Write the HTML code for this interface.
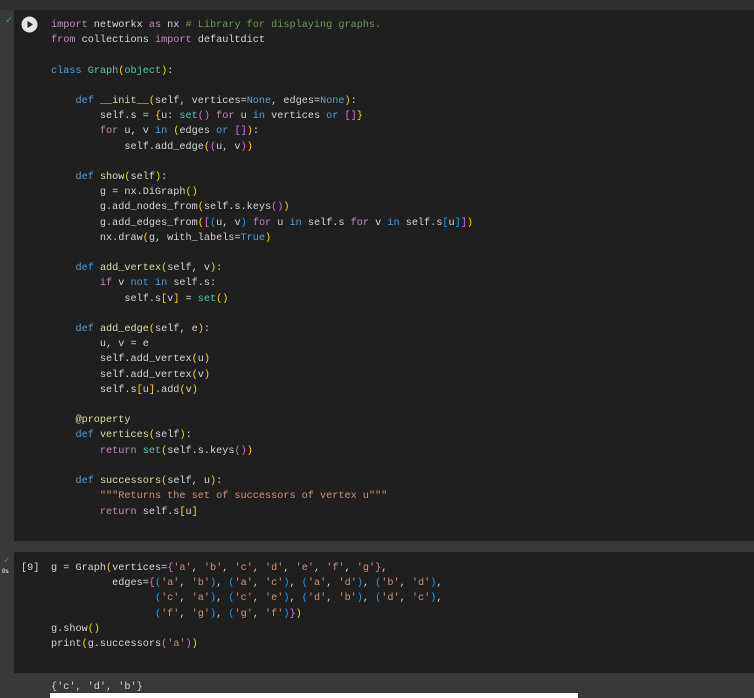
<!DOCTYPE html>
<html><head><style>
html,body{margin:0;padding:0;width:754px;height:698px;overflow:hidden;background:#383838;font-family:"Liberation Mono",monospace;}
.top{position:absolute;left:0;top:0;width:754px;height:10px;background:#2f2f2f;}
.cell{position:absolute;left:14px;background:#1f1f1f;width:740px;}
pre{position:absolute;margin:0;font-family:"Liberation Mono",monospace;font-size:10.2px;line-height:15.2px;color:#d4d4d4;white-space:pre;}
.k{color:#c586c0}.c{color:#6a9955}.b{color:#569cd6}.t{color:#4ec9b0}.s{color:#ce9178}.y{color:#ffd700}.m{color:#da70d6}.p{color:#179fff}.f{color:#dcdcaa}
</style></head><body>
<div class="top"></div>
<div class="cell" style="top:10px;height:531px;"></div>
<div class="cell" style="top:552px;height:121px;"></div>
<div style="position:absolute;left:5px;top:15px;color:#2ea043;font-size:10px;font-family:'DejaVu Sans',sans-serif">✓</div>
<svg style="position:absolute;left:21px;top:16px" width="17" height="17"><circle cx="8.5" cy="8.5" r="8" fill="#e3e3e3"/><path d="M6.5 5 L12 8.5 L6.5 12Z" fill="#222"/></svg>
<pre style="left:51px;top:18px"><span class="k">import</span> networkx <span class="k">as</span> nx <span class="c"># Library for displaying graphs.</span>
<span class="k">from</span> collections <span class="k">import</span> defaultdict

<span class="b">class</span> <span class="t">Graph</span><span class="y">(</span><span class="t">object</span><span class="y">)</span>:

    <span class="b">def</span> <span class="f">__init__</span><span class="y">(</span>self, vertices=<span class="b">None</span>, edges=<span class="b">None</span><span class="y">)</span>:
        self.s = <span class="y">{</span>u: <span class="t">set</span><span class="m">()</span> <span class="k">for</span> u <span class="b">in</span> vertices <span class="b">or</span> <span class="m">[]</span><span class="y">}</span>
        <span class="k">for</span> u, v <span class="b">in</span> <span class="y">(</span>edges <span class="b">or</span> <span class="m">[]</span><span class="y">)</span>:
            self.add_edge<span class="y">(</span><span class="m">(</span>u, v<span class="m">)</span><span class="y">)</span>

    <span class="b">def</span> <span class="f">show</span><span class="y">(</span>self<span class="y">)</span>:
        g = nx.DiGraph<span class="y">()</span>
        g.add_nodes_from<span class="y">(</span>self.s.keys<span class="m">()</span><span class="y">)</span>
        g.add_edges_from<span class="y">(</span><span class="m">[</span><span class="p">(</span>u, v<span class="p">)</span> <span class="k">for</span> u <span class="b">in</span> self.s <span class="k">for</span> v <span class="b">in</span> self.s<span class="p">[</span>u<span class="p">]</span><span class="m">]</span><span class="y">)</span>
        nx.draw<span class="y">(</span>g, with_labels=<span class="b">True</span><span class="y">)</span>

    <span class="b">def</span> <span class="f">add_vertex</span><span class="y">(</span>self, v<span class="y">)</span>:
        <span class="k">if</span> v <span class="b">not</span> <span class="b">in</span> self.s:
            self.s<span class="y">[</span>v<span class="y">]</span> = <span class="t">set</span><span class="y">()</span>

    <span class="b">def</span> <span class="f">add_edge</span><span class="y">(</span>self, e<span class="y">)</span>:
        u, v = e
        self.add_vertex<span class="y">(</span>u<span class="y">)</span>
        self.add_vertex<span class="y">(</span>v<span class="y">)</span>
        self.s<span class="y">[</span>u<span class="y">]</span>.add<span class="y">(</span>v<span class="y">)</span>

    <span class="f">@property</span>
    <span class="b">def</span> <span class="f">vertices</span><span class="y">(</span>self<span class="y">)</span>:
        <span class="k">return</span> <span class="t">set</span><span class="y">(</span>self.s.keys<span class="m">()</span><span class="y">)</span>

    <span class="b">def</span> <span class="f">successors</span><span class="y">(</span>self, u<span class="y">)</span>:
        <span class="s">"""Returns the set of successors of vertex u"""</span>
        <span class="k">return</span> self.s<span class="y">[</span>u<span class="y">]</span></pre>
<div style="position:absolute;left:3px;top:556px;color:#2ea043;font-size:9px;font-family:'DejaVu Sans',sans-serif">✓</div>
<div style="position:absolute;left:2px;top:569px;color:#ccc;font-size:6px;font-family:'Liberation Sans',sans-serif;font-weight:bold">0s</div>
<pre style="left:21px;top:561px">[9]</pre>
<pre style="left:51px;top:561px">g = Graph<span class="y">(</span>vertices=<span class="m">{</span><span class="s">'a'</span>, <span class="s">'b'</span>, <span class="s">'c'</span>, <span class="s">'d'</span>, <span class="s">'e'</span>, <span class="s">'f'</span>, <span class="s">'g'</span><span class="m">}</span>,
          edges=<span class="m">{</span><span class="p">(</span><span class="s">'a'</span>, <span class="s">'b'</span><span class="p">)</span>, <span class="p">(</span><span class="s">'a'</span>, <span class="s">'c'</span><span class="p">)</span>, <span class="p">(</span><span class="s">'a'</span>, <span class="s">'d'</span><span class="p">)</span>, <span class="p">(</span><span class="s">'b'</span>, <span class="s">'d'</span><span class="p">)</span>,
                 <span class="p">(</span><span class="s">'c'</span>, <span class="s">'a'</span><span class="p">)</span>, <span class="p">(</span><span class="s">'c'</span>, <span class="s">'e'</span><span class="p">)</span>, <span class="p">(</span><span class="s">'d'</span>, <span class="s">'b'</span><span class="p">)</span>, <span class="p">(</span><span class="s">'d'</span>, <span class="s">'c'</span><span class="p">)</span>,
                 <span class="p">(</span><span class="s">'f'</span>, <span class="s">'g'</span><span class="p">)</span>, <span class="p">(</span><span class="s">'g'</span>, <span class="s">'f'</span><span class="p">)</span><span class="m">}</span><span class="y">)</span>
g.show<span class="y">()</span>
print<span class="y">(</span>g.successors<span class="m">(</span><span class="s">'a'</span><span class="m">)</span><span class="y">)</span></pre>
<pre style="left:51px;top:680px">{'c', 'd', 'b'}</pre>
<div style="position:absolute;left:50px;top:693px;width:528px;height:5px;background:#fff"></div>
</body></html>
